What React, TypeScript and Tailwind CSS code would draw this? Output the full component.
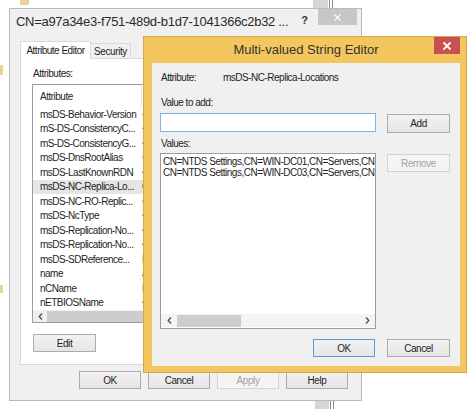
import React from "react";

type Row = { name: string; value: string; selected?: boolean };

const attributeRows: Row[] = [
  { name: "msDS-Behavior-Version", value: "<not set>" },
  { name: "mS-DS-ConsistencyC...", value: "<not set>" },
  { name: "mS-DS-ConsistencyG...", value: "<not set>" },
  { name: "msDS-DnsRootAlias", value: "<not set>" },
  { name: "msDS-LastKnownRDN", value: "<not set>" },
  { name: "msDS-NC-Replica-Lo...", value: "CN=NTDS Settings", selected: true },
  { name: "msDS-NC-RO-Replic...", value: "<not set>" },
  { name: "msDS-NcType", value: "<not set>" },
  { name: "msDS-Replication-No...", value: "<not set>" },
  { name: "msDS-Replication-No...", value: "<not set>" },
  { name: "msDS-SDReference...", value: "DC=contoso" },
  { name: "name", value: "a97a34e3" },
  { name: "nCName", value: "DC=contoso" },
  { name: "nETBIOSName", value: "<not set>" },
];

const replicaValues = [
  "CN=NTDS Settings,CN=WIN-DC01,CN=Servers,CN",
  "CN=NTDS Settings,CN=WIN-DC03,CN=Servers,CN",
];

function ChevronLeft() {
  return (
    <svg width="5" height="7" viewBox="0 0 5 7">
      <path d="M4 0.5 L1.2 3.5 L4 6.5" stroke="#4d4d4d" strokeWidth="1.3" fill="none" />
    </svg>
  );
}

function ChevronRight() {
  return (
    <svg width="5" height="7" viewBox="0 0 5 7">
      <path d="M1 0.5 L3.8 3.5 L1 6.5" stroke="#4d4d4d" strokeWidth="1.3" fill="none" />
    </svg>
  );
}

function CloseGlyph({ size = 7, width = 1.4 }: { size?: number; width?: number }) {
  return (
    <svg width={size} height={size} viewBox="0 0 8 8">
      <path d="M1 1 L7 7 M7 1 L1 7" stroke="#ffffff" strokeWidth={width} strokeLinecap="square" fill="none" />
    </svg>
  );
}

function Button({
  label,
  width,
  height = "h-[18px]",
  disabled,
  primary,
}: {
  label: string;
  width: string;
  height?: string;
  disabled?: boolean;
  primary?: boolean;
}) {
  const tone = disabled
    ? "border-[#d3d3d3] bg-[#f4f4f4] text-[#a3a3a3]"
    : primary
    ? "border-[#5b9bd5] bg-gradient-to-b from-[#f2f2f2] to-[#e5e5e5] text-[#1e1e1e]"
    : "border-[#acacac] bg-gradient-to-b from-[#f2f2f2] to-[#e5e5e5] text-[#1e1e1e]";
  return (
    <div
      className={`flex shrink-0 items-center justify-center border text-[10px] tracking-[-0.4px] ${width} ${height} ${tone}`}
    >
      {label}
    </div>
  );
}

function PropertiesWindow() {
  return (
    <div className="absolute left-[9px] top-[8px] flex h-[393px] w-[353px] flex-col border border-[#b9b9b9] bg-[#f0f0f0]">
      {/* caption */}
      <div className="flex h-[27px] shrink-0 items-start">
        <div className="whitespace-nowrap pl-[6px] pt-[5px] text-[13px] leading-[16px] tracking-[-0.3px] text-[#2b2b2b]">
          CN=a97a34e3-f751-489d-b1d7-1041366c2b32 ...
        </div>
        <div className="ml-auto mr-[10px] pt-[6px] text-[11px] font-bold leading-[11px] text-[#333]">?</div>
        <div className="mr-[4px] flex h-[16px] w-[39px] items-center justify-center bg-[#c7c7c7]">
          <CloseGlyph size={7} width={1.3} />
        </div>
      </div>

      {/* tab control */}
      <div className="ml-[10px] mt-[5px] flex w-[332px] flex-col">
        <div className="flex h-[17px] items-end">
          <div className="relative z-10 -mb-px flex h-[18px] w-[71px] items-center justify-center border border-b-0 border-[#d9d9d9] bg-white text-[10px] tracking-[-0.5px]">
            Attribute Editor
          </div>
          <div className="flex h-[15px] w-[40px] items-center justify-center border border-b-0 border-l-0 border-[#d9d9d9] bg-[#f0f0f0] text-[10px] tracking-[-0.4px]">
            Security
          </div>
        </div>
        <div className="flex h-[307px] flex-col border border-[#d9d9d9] bg-white">
          <div className="pl-[12px] pt-[9px] text-[10px] leading-[12px] tracking-[-0.5px]">Attributes:</div>
          <div className="ml-[11px] mt-[4px] flex h-[239px] w-[310px] flex-col border border-[#9c9c9c] bg-white">
            <div className="flex h-[22px] shrink-0 items-center text-[10px] tracking-[-0.5px]">
              <div className="w-[108px] pl-[7px]">Attribute</div>
              <div className="h-full w-px bg-[#e5e5e5]" />
              <div className="pl-[1px]">Value</div>
            </div>
            {attributeRows.map((row, i) => (
              <div
                key={i}
                className={`flex h-[14.5px] shrink-0 items-center whitespace-nowrap text-[10px] tracking-[-0.5px] ${
                  row.selected ? "bg-[#e5e5e5]" : ""
                }`}
              >
                <div className="w-[109px] overflow-hidden pl-[7px]">{row.name}</div>
                <div className="overflow-hidden">{row.value}</div>
              </div>
            ))}
            <div className="flex h-[12px] shrink-0 items-center bg-[#f0f0f0]">
              <div className="flex w-[14px] items-center justify-center">
                <ChevronLeft />
              </div>
              <div className="h-[11px] flex-1 bg-[#cdcdcd]" />
            </div>
          </div>
          <div className="ml-[12px] mt-[11px]">
            <Button label="Edit" width="w-[63px]" />
          </div>
        </div>
      </div>

      {/* dialog buttons */}
      <div className="ml-[69px] mt-[6px] flex gap-[7px]">
        <Button label="OK" width="w-[62px]" />
        <Button label="Cancel" width="w-[62px]" />
        <Button label="Apply" width="w-[62px]" disabled />
        <Button label="Help" width="w-[62px]" />
      </div>
    </div>
  );
}

function StringEditorWindow() {
  return (
    <div className="absolute left-[143px] top-[36px] flex h-[337px] w-[324px] flex-col border border-[#d6a744] bg-[#f3c65e] pl-[8px] pr-[6px]">
      {/* caption */}
      <div className="flex h-[26px] shrink-0 items-start">
        <div className="w-[26px]" />
        <div className="flex h-[26px] flex-1 items-center justify-center text-[13px] text-[#333]">
          Multi-valued String Editor
        </div>
        <div className="flex h-[17px] w-[26px] items-center justify-center bg-[#c75050]">
          <CloseGlyph size={8} width={1.8} />
        </div>
      </div>

      {/* client area */}
      <div className="flex h-[303px] flex-col bg-[#f0f0f0] pl-[8px] text-[10px] tracking-[-0.5px]">
        <div className="flex pl-[1px] pt-[9px] leading-[12px]">
          <div className="w-[62px]">Attribute:</div>
          <div>msDS-NC-Replica-Locations</div>
        </div>
        <div className="mt-[13px] pl-[1px] leading-[12px]">Value to add:</div>
        <div className="mt-[4px] flex items-start">
          <div className="h-[19px] w-[216px] border border-[#7eb4ea] bg-white" />
          <div className="ml-[11px] mt-px">
            <Button label="Add" width="w-[63px]" height="h-[19px]" />
          </div>
        </div>
        <div className="mt-[5px] pl-[1px] leading-[12px]">Values:</div>
        <div className="mt-[3px] flex items-start">
          <div className="flex h-[176px] w-[216px] flex-col overflow-hidden border border-[#9c9c9c] bg-white">
            <div className="min-w-0 flex-1 overflow-hidden pl-[2px] pt-[3px]">
              {replicaValues.map((v, i) => (
                <div key={i} className="whitespace-nowrap leading-[10.5px]">
                  {v}
                </div>
              ))}
            </div>
            <div className="mb-[1px] flex h-[13px] shrink-0 items-center bg-[#f3f3f3]">
              <div className="flex w-[16px] items-center justify-center">
                <ChevronLeft />
              </div>
              <div className="h-[12px] w-[64px] bg-[#cdcdcd]" />
              <div className="flex-1" />
              <div className="flex w-[16px] items-center justify-center">
                <ChevronRight />
              </div>
            </div>
          </div>
          <div className="ml-[11px] mt-px">
            <Button label="Remove" width="w-[63px]" disabled />
          </div>
        </div>
        <div className="mt-[10px] flex">
          <div className="ml-[153px]">
            <Button label="OK" width="w-[62px]" primary />
          </div>
          <div className="ml-[12px]">
            <Button label="Cancel" width="w-[63px]" />
          </div>
        </div>
      </div>
    </div>
  );
}

export default function App() {
  return (
    <div className="relative h-[409px] w-[474px] overflow-hidden bg-white font-['Liberation_Sans',Arial,sans-serif] text-[#1e1e1e]">
      {/* bits of the explorer window behind */}
      <div className="absolute left-[20px] top-0 h-[5px] w-[9px] bg-[#ead396]" />
      <div className="absolute left-0 top-[65px] h-[10px] w-[3px] bg-[#ead396]" />
      <div className="absolute left-0 top-[285px] h-[8px] w-[3px] bg-[#ead396]" />
      <div className="absolute left-[313px] top-0 h-[8px] w-[15px] bg-[#d6d6d6]" />
      <div className="absolute left-[329px] top-0 h-[8px] w-px bg-[#8c8c8c]" />
      <div className="absolute left-[332px] top-0 h-[8px] w-px bg-[#8c8c8c]" />
      <div className="absolute left-[315px] top-[401px] h-[8px] w-[14px] bg-[#d6d6d6]" />
      <div className="absolute left-[330px] top-[401px] h-[8px] w-px bg-[#8c8c8c]" />
      <div className="absolute left-[333px] top-[401px] h-[8px] w-px bg-[#8c8c8c]" />

      <PropertiesWindow />
      <StringEditorWindow />
    </div>
  );
}
